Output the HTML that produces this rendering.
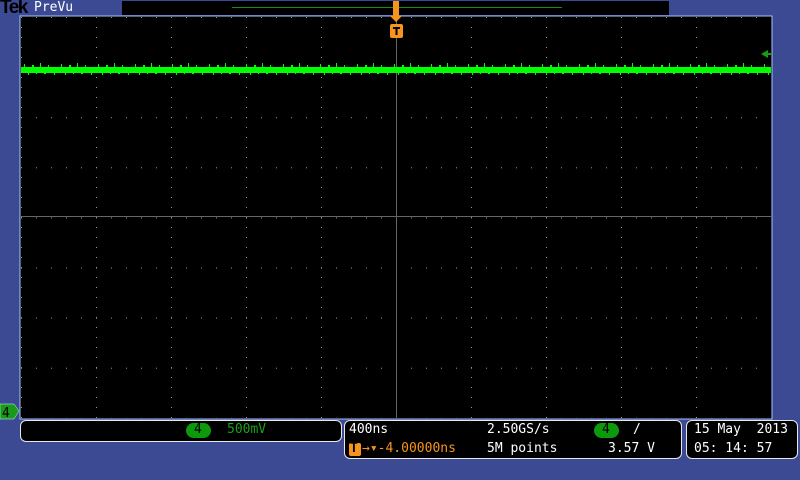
<!DOCTYPE html>
<html><head><style>
body{margin:0;width:800px;height:480px;background:#3c4a94;position:relative;overflow:hidden;font-family:"DejaVu Sans Mono","Liberation Mono",monospace;}
.box{position:absolute;background:#000;border:1px solid #e8e8e8;border-radius:6px;box-sizing:border-box;}
.t{position:absolute;font-size:13px;white-space:pre;}
</style></head><body>
<div style="position:absolute;left:0;top:-3px;font:bold 19px 'Liberation Sans',sans-serif;color:#000;letter-spacing:-1.5px">Tek</div>
<div class="t" style="left:34px;top:0px;color:#fff;font-size:13px">PreVu</div>
<div style="position:absolute;left:122px;top:1px;width:547px;height:14px;background:#000"></div>
<div style="position:absolute;left:232px;top:7px;width:330px;height:1px;background:#1a8a1a"></div>
<svg width="800" height="480" style="position:absolute;left:0;top:0">
<defs>
<pattern id="vd" x="21" y="17" width="75" height="10" patternUnits="userSpaceOnUse"><rect x="0" y="0" width="1" height="1" fill="#999"/></pattern>
<pattern id="hd" x="21" y="17" width="15" height="50.1" patternUnits="userSpaceOnUse"><rect x="0" y="0" width="1" height="1" fill="#999"/></pattern>
<pattern id="nz" x="21" y="62" width="37" height="20" patternUnits="userSpaceOnUse">
<rect x="0" y="5" width="37" height="6" fill="#00ff00"/>
<rect x="3" y="2" width="1" height="4" fill="#00ff00"/><rect x="11" y="3" width="2" height="3" fill="#00ff00"/>
<rect x="19" y="1" width="1" height="5" fill="#00ff00"/><rect x="27" y="3" width="1" height="3" fill="#00ff00"/>
<rect x="7" y="10" width="1" height="3" fill="#00ff00"/><rect x="23" y="10" width="2" height="2" fill="#00ff00"/>
<rect x="33" y="10" width="1" height="3" fill="#00ff00"/><rect x="15" y="10" width="1" height="2" fill="#00ff00"/>
</pattern>
</defs>
<rect x="20" y="16" width="752" height="403" fill="#000"/>
<rect x="20" y="16" width="752" height="403" fill="none" stroke="#a8c4ff" stroke-width="1"/>
<rect x="21" y="17" width="750" height="401" fill="url(#vd)"/>
<rect x="21" y="17" width="750" height="401" fill="url(#hd)"/>
<line x1="21" y1="216.5" x2="771" y2="216.5" stroke="#666" stroke-width="1"/>
<line x1="396.5" y1="17" x2="396.5" y2="418" stroke="#666" stroke-width="1"/>
<rect x="21" y="62" width="750" height="20" fill="url(#nz)"/>
<path d="M761 54 L768 50 L768 53 L772 53 L772 55 L768 55 L768 58 Z" fill="#1a9a1a"/>
<rect x="393" y="1" width="6" height="15" fill="#f7941d"/>
<path d="M390 16 L402 16 L396 22 Z" fill="#f7941d"/>
<rect x="390" y="24" width="13" height="14" rx="2" fill="#f7941d"/>
<path d="M393 27 H400 V29 H397.5 V35 H395.5 V29 H393 Z" fill="#000"/>
<path d="M0 404 L14 404 L19 411 L14 419 L0 419 Z" fill="#1a9a1a" stroke="#cfe" stroke-width="0.5"/>
<text x="2" y="417" font-family="DejaVu Sans Mono" font-size="13" fill="#000">4</text>
</svg>
<div class="box" style="left:20px;top:420px;width:322px;height:22px"></div>
<div style="position:absolute;left:186px;top:423px;width:25px;height:15px;border-radius:8px;background:#0c9a0c"></div>
<div class="t" style="left:194px;top:422px;color:#000">4</div>
<div class="t" style="left:227px;top:422px;color:#1aa01a">500mV</div>
<div class="box" style="left:344px;top:420px;width:338px;height:39px"></div>
<div class="t" style="left:349px;top:422px;color:#fff">400ns</div>
<div class="t" style="left:487px;top:422px;color:#fff">2.50GS/s</div>
<div style="position:absolute;left:594px;top:423px;width:25px;height:15px;border-radius:8px;background:#0c9a0c"></div>
<div class="t" style="left:602px;top:422px;color:#000">4</div>
<div class="t" style="left:633px;top:422px;color:#fff">/</div>
<div style="position:absolute;left:349px;top:443px;width:12px;height:13px;background:#f7941d;border-radius:2px"></div>
<div class="t" style="left:350px;top:441px;color:#000;font-weight:bold">T</div>
<div class="t" style="left:362px;top:441px;color:#f7941d">→▾-4.00000ns</div>
<div class="t" style="left:487px;top:441px;color:#fff">5M points</div>
<div class="t" style="left:608px;top:441px;color:#fff">3.57 V</div>
<div class="box" style="left:686px;top:420px;width:112px;height:39px"></div>
<div class="t" style="left:694px;top:422px;color:#fff">15 May  2013</div>
<div class="t" style="left:694px;top:441px;color:#fff">05: 14: 57</div>
</body></html>
